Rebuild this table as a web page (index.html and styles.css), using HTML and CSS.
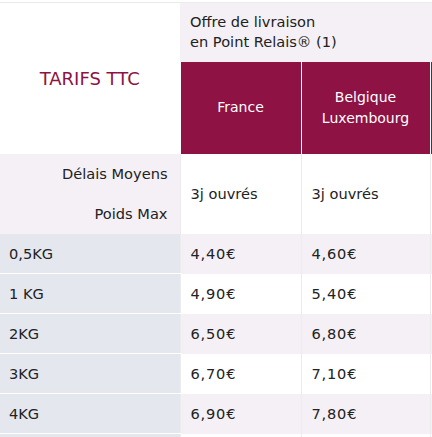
FILE: index.html
```html
<!DOCTYPE html>
<html lang="fr">
<head>
<meta charset="utf-8">
<link rel="stylesheet" href="styles.css">
</head>
<body>
<table class="tarifs">
  <colgroup>
    <col class="c-label">
    <col class="c-fr">
    <col class="c-be">
    <col class="c-x">
  </colgroup>
  <tr class="r-offre">
    <th class="title" rowspan="2">TARIFS TTC</th>
    <th class="offre" colspan="3">Offre de livraison<br>en Point Relais® (1)</th>
  </tr>
  <tr class="r-pays">
    <th class="pays">France</th>
    <th class="pays">Belgique<br>Luxembourg</th>
    <th class="pays"></th>
  </tr>
  <tr class="r-half">
    <td class="lab">Délais Moyens</td>
    <td class="val" rowspan="2">3j ouvrés</td>
    <td class="val" rowspan="2">3j ouvrés</td>
    <td class="val" rowspan="2"></td>
  </tr>
  <tr class="r-half">
    <td class="lab">Poids Max</td>
  </tr>
  <tr class="r-w alt">
    <td class="w">0,5KG</td><td class="val price">4,40€</td><td class="val price">4,60€</td><td class="val"></td>
  </tr>
  <tr class="r-w">
    <td class="w">1 KG</td><td class="val price">4,90€</td><td class="val price">5,40€</td><td class="val"></td>
  </tr>
  <tr class="r-w alt">
    <td class="w">2KG</td><td class="val price">6,50€</td><td class="val price">6,80€</td><td class="val"></td>
  </tr>
  <tr class="r-w">
    <td class="w">3KG</td><td class="val price">6,70€</td><td class="val price">7,10€</td><td class="val"></td>
  </tr>
  <tr class="r-w alt">
    <td class="w">4KG</td><td class="val price">6,90€</td><td class="val price">7,80€</td><td class="val"></td>
  </tr>
  <tr class="r-end">
    <td class="w"></td><td class="val"></td><td class="val"></td><td class="val"></td>
  </tr>
</table>
</body>
</html>
```
FILE: styles.css
```css
html, body {
  margin: 0;
  padding: 0;
  overflow: hidden;
  background: #ffffff;
}
body {
  font-family: "DejaVu Sans", "Open Sans", sans-serif;
  font-size: 14.6px;
  color: #222222;
  padding-top: 2px;
}
.tarifs {
  border-collapse: collapse;
  table-layout: fixed;
  width: 560px;
  border-top: 1px solid #ebebeb;
}
.c-label { width: 180px; }
.c-fr { width: 121px; }
.c-be { width: 129px; }
.c-x { width: 130px; }
th, td {
  padding: 0;
  font-weight: 400;
  vertical-align: middle;
}
.r-offre { height: 59px; }
.r-pays { height: 92px; }
.r-half { height: 40px; }
.r-w { height: 40px; }
.r-end { height: 10px; }
.title {
  background: #ffffff;
  color: #8e1244;
  font-size: 18px;
  text-align: center;
  vertical-align: top;
  padding-top: 65px;
}
.offre {
  background: #f4f0f5;
  text-align: left;
  padding: 0 10px;
  line-height: 20px;
}
.pays {
  background: #8e1244;
  color: #ffffff;
  font-size: 14px;
  line-height: 21px;
  text-align: center;
  border-left: 1px solid #ffffff;
}
.lab {
  background: #f4f0f5;
  text-align: right;
  padding-right: 12px;
}
.val {
  background: #ffffff;
  padding-left: 10px;
  border-left: 1px solid #ececec;
}
.price { letter-spacing: 0.8px; }
.alt .val { background: #f4f0f5; }
.w {
  background: #e5e7ef;
  padding-left: 9px;
  border-bottom: 1px solid #ffffff;
}
.r-end .w { border-bottom: 0; }
```
